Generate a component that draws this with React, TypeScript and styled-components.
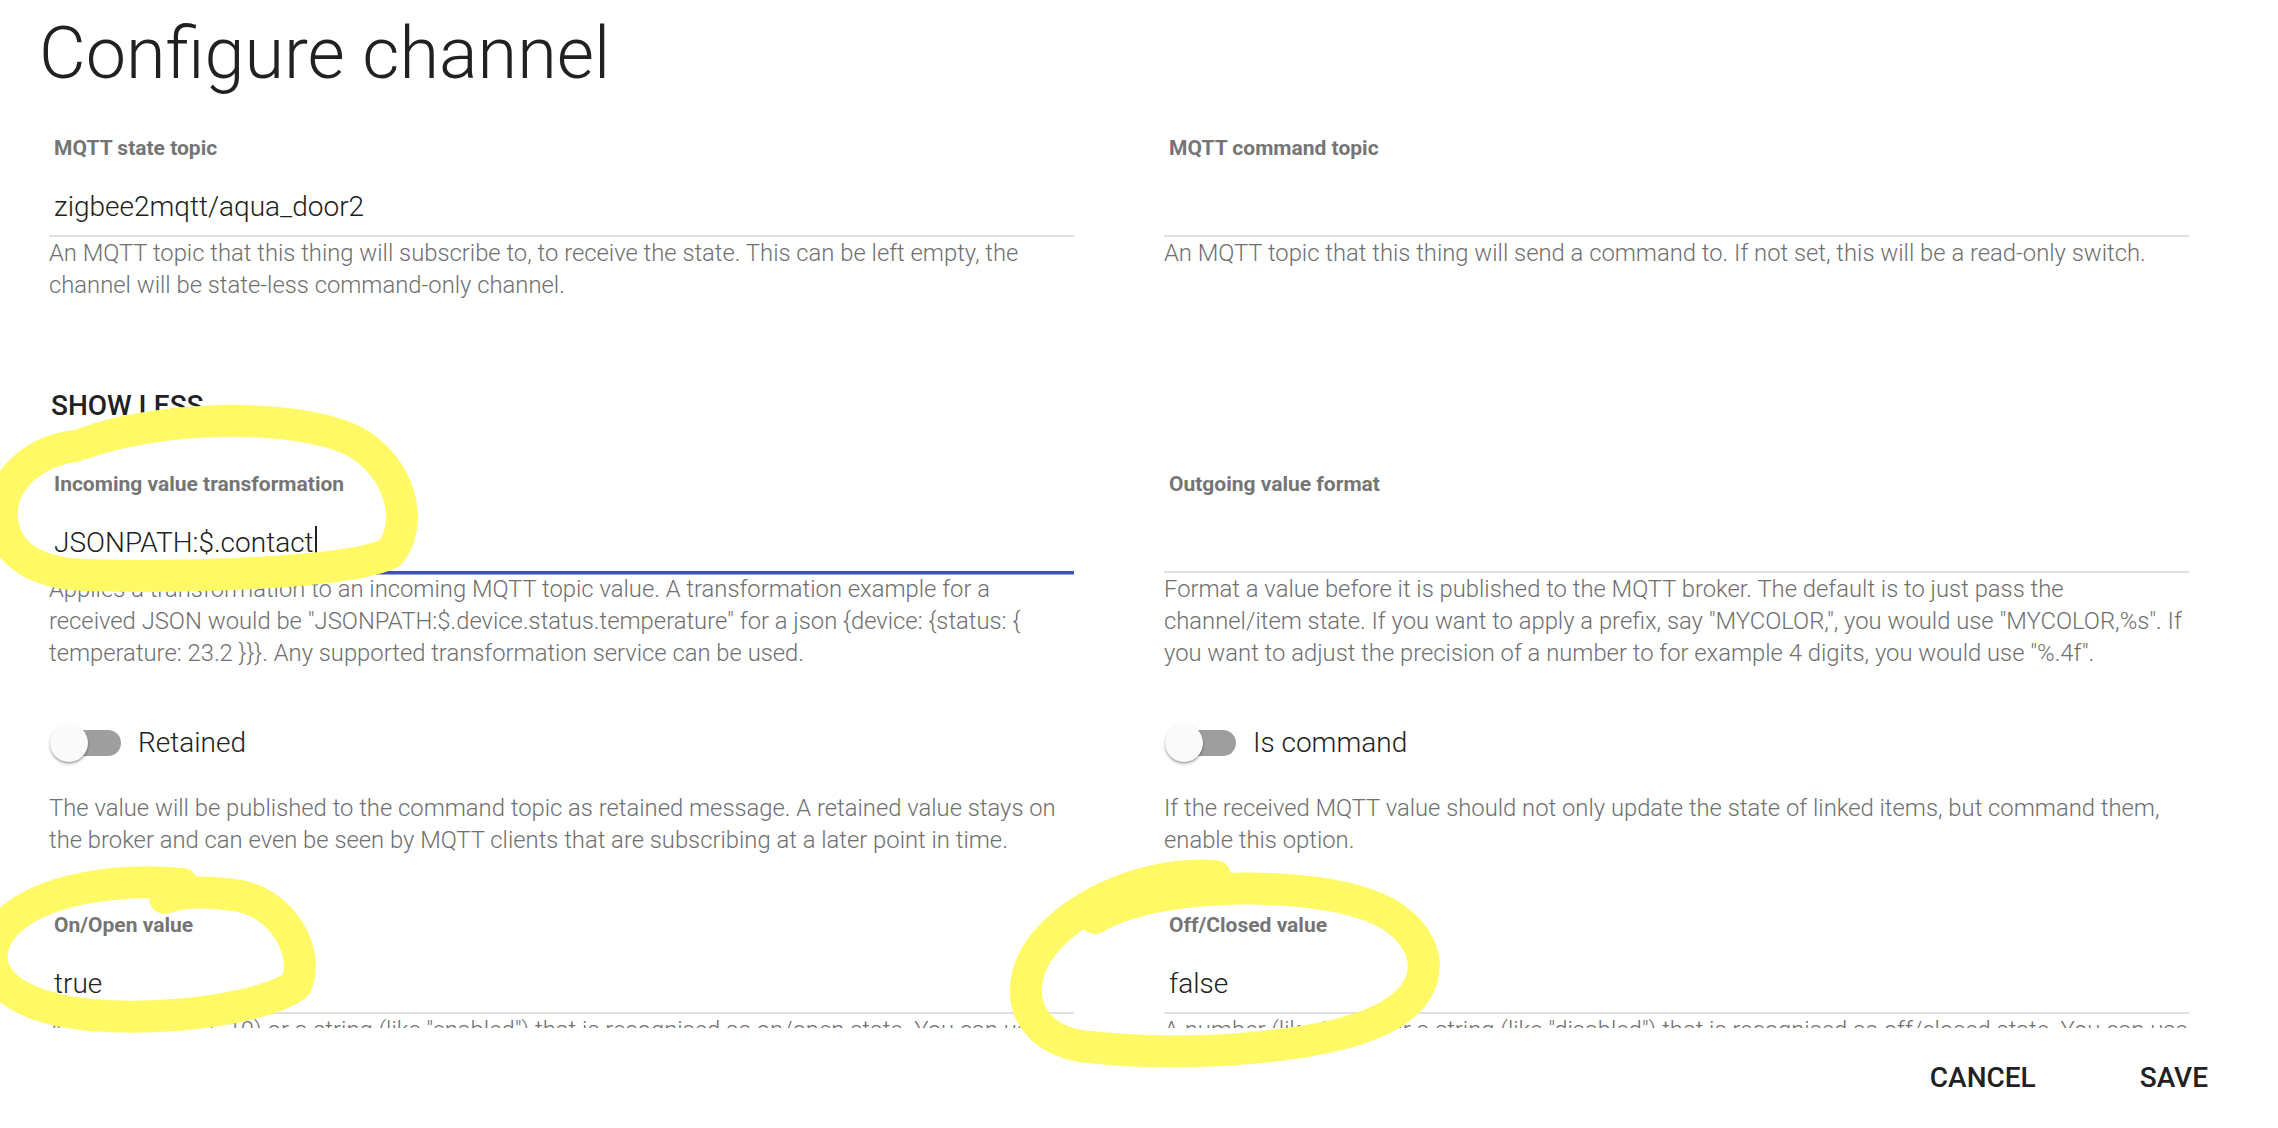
import React from "react";
import styled, { createGlobalStyle } from "styled-components";

const GlobalStyle = createGlobalStyle`
  html, body { margin: 0; padding: 0; background: #ffffff; }
  body { font-family: Roboto, "Liberation Sans", Arial, sans-serif; }
  * { box-sizing: border-box; }
`;

const Dialog = styled.div`
  position: relative;
  width: 2278px;
  height: 1128px;
  display: flex;
  flex-direction: column;
  background: #ffffff;
  overflow: hidden;
`;

const Title = styled.h1`
  margin: 0;
  padding: 12px 39px 0;
  font-size: 72px;
  font-weight: 300;
  line-height: 84px;
  color: #212121;
  flex: none;
`;

const Content = styled.div`
  flex: 1;
  min-height: 0;
  overflow: hidden;
  padding: 37px 89px 0 49px;
  display: flex;
  flex-direction: column;
`;

const Row = styled.div<{ $top?: number }>`
  display: grid;
  grid-template-columns: 1fr 1fr;
  column-gap: 90px;
  flex: none;
  margin-top: ${(p) => p.$top ?? 0}px;
`;

const Field = styled.div`
  display: flex;
  flex-direction: column;
`;

const Label = styled.label`
  padding-left: 5px;
  font-size: 21px;
  font-weight: 700;
  line-height: 30px;
  color: #757575;
`;

const InputValue = styled.div<{ $focused?: boolean }>`
  margin-top: 24px;
  height: 50px;
  padding: 0 5px 8px;
  font-size: 28px;
  font-weight: 300;
  line-height: 40px;
  color: #212121;
  white-space: nowrap;
  border-bottom: 2px solid ${(p) => (p.$focused ? "#3f51b5" : "#e0e0e0")};
  box-shadow: ${(p) => (p.$focused ? "0 1.5px 0 #3f51b5" : "none")};
`;

const Caret = styled.span`
  display: inline-block;
  width: 2px;
  height: 31px;
  margin-left: 1px;
  background: #212121;
  vertical-align: -5px;
`;

const Hint = styled.div<{ $gap?: number }>`
  margin-top: ${(p) => p.$gap ?? 0}px;
  font-size: 23.8px;
  font-weight: 300;
  line-height: 32px;
  color: #6f6f6f;
`;

const ShowLess = styled.button`
  align-self: flex-start;
  flex: none;
  margin: 54px 0 0;
  border: 0;
  background: none;
  padding: 40px 2px 0;
  font-family: Roboto, "Liberation Sans", Arial, sans-serif;
  font-size: 28px;
  font-weight: 500;
  line-height: 21px;
  color: #212121;
  text-transform: uppercase;
  cursor: pointer;
`;

const ToggleLine = styled.div`
  display: flex;
  align-items: center;
  gap: 17px;
  height: 40px;
`;

const Switch = styled.span`
  position: relative;
  flex: none;
  width: 72px;
  height: 40px;
`;

const Track = styled.span`
  position: absolute;
  left: 7px;
  right: 0;
  top: 7px;
  height: 26px;
  border-radius: 13px;
  background: #9e9e9e;
`;

const Thumb = styled.span`
  position: absolute;
  left: 1px;
  top: 1px;
  width: 38px;
  height: 38px;
  border-radius: 50%;
  background: #fafafa;
  box-shadow: 0 2px 3px rgba(0, 0, 0, 0.28), 0 1px 1px rgba(0, 0, 0, 0.14);
`;

const ToggleText = styled.span`
  font-size: 28px;
  font-weight: 300;
  line-height: 40px;
  color: #212121;
`;

const Actions = styled.div`
  flex: none;
  height: 100px;
  display: flex;
  justify-content: flex-end;
  align-items: center;
  gap: 52px;
  padding-right: 44px;
`;

const ActionButton = styled.button`
  border: 0;
  background: none;
  margin: 0;
  padding: 0 26px;
  font-family: Roboto, "Liberation Sans", Arial, sans-serif;
  font-size: 28px;
  font-weight: 500;
  line-height: 60px;
  color: #212121;
  text-transform: uppercase;
  cursor: pointer;
`;

const Overlay = styled.svg`
  position: absolute;
  left: 0;
  top: 0;
  pointer-events: none;
`;

type FieldProps = {
  label: string;
  value?: string;
  focused?: boolean;
  hint: string;
};

function TextField({ label, value, focused, hint }: FieldProps) {
  return (
    <Field>
      <Label>{label}</Label>
      <InputValue $focused={focused}>
        {value}
        {focused && <Caret />}
      </InputValue>
      <Hint>{hint}</Hint>
    </Field>
  );
}

function ToggleField({ label, hint }: { label: string; hint: string }) {
  return (
    <Field>
      <ToggleLine>
        <Switch>
          <Track />
          <Thumb />
        </Switch>
        <ToggleText>{label}</ToggleText>
      </ToggleLine>
      <Hint $gap={29}>{hint}</Hint>
    </Field>
  );
}

const yellow = "#fff966";

export default function App() {
  return (
    <>
      <GlobalStyle />
      <Dialog>
        <Title>Configure channel</Title>
        <Content>
          <Row>
            <TextField
              label="MQTT state topic"
              value="zigbee2mqtt/aqua_door2"
              hint="An MQTT topic that this thing will subscribe to, to receive the state. This can be left empty, the channel will be state-less command-only channel."
            />
            <TextField
              label="MQTT command topic"
              hint="An MQTT topic that this thing will send a command to. If not set, this will be a read-only switch."
            />
          </Row>
          <ShowLess>Show less</ShowLess>
          <Row $top={53}>
            <TextField
              label="Incoming value transformation"
              value="JSONPATH:$.contact"
              focused
              hint={'Applies a transformation to an incoming MQTT topic value. A transformation example for a received JSON would be "JSONPATH:$.device.status.temperature" for a json {device: {status: { temperature: 23.2 }}}. Any supported transformation service can be used.'}
            />
            <TextField
              label="Outgoing value format"
              hint={'Format a value before it is published to the MQTT broker. The default is to just pass the channel/item state. If you want to apply a prefix, say "MYCOLOR,", you would use "MYCOLOR,%s". If you want to adjust the precision of a number to for example 4 digits, you would use "%.4f".'}
            />
          </Row>
          <Row $top={54}>
            <ToggleField
              label="Retained"
              hint="The value will be published to the command topic as retained message. A retained value stays on the broker and can even be seen by MQTT clients that are subscribing at a later point in time."
            />
            <ToggleField
              label="Is command"
              hint="If the received MQTT value should not only update the state of linked items, but command them, enable this option."
            />
          </Row>
          <Row $top={54}>
            <TextField
              label="On/Open value"
              value="true"
              hint={'A number (like 1, 10) or a string (like "enabled") that is recognised as on/open state. You can use this parameter for a second keyword, next to ON (OPEN).'}
            />
            <TextField
              label="Off/Closed value"
              value="false"
              hint={'A number (like 0, -10) or a string (like "disabled") that is recognised as off/closed state. You can use this parameter for a second keyword, next to OFF (CLOSED).'}
            />
          </Row>
        </Content>
        <Actions>
          <ActionButton>Cancel</ActionButton>
          <ActionButton>Save</ActionButton>
        </Actions>
        <Overlay width="2278" height="1128" viewBox="0 0 2278 1128">
          <g fill="none" stroke={yellow} strokeWidth="32" strokeLinecap="round" strokeLinejoin="round">
            <path d="M 85 443 C 160 416, 290 412, 352 440 C 402 466, 414 525, 390 553 C 350 574, 170 578, 85 575 C 30 573, 0 550, 2 510 C 4 475, 40 450, 75 446" />
            <path d="M 182 884 C 120 878, 40 888, 5 925 C -25 960, -8 1005, 90 1015 C 180 1022, 270 1005, 296 985 C 310 955, 285 905, 240 896 C 215 892, 185 890, 165 898" />
            <path d="M 1215 876 C 1150 872, 1080 900, 1043 945 C 1012 985, 1022 1035, 1080 1046 C 1180 1058, 1330 1050, 1390 1015 C 1440 985, 1430 940, 1390 915 C 1340 885, 1220 882, 1150 898 C 1125 904, 1105 912, 1095 918" />
          </g>
        </Overlay>
      </Dialog>
    </>
  );
}
